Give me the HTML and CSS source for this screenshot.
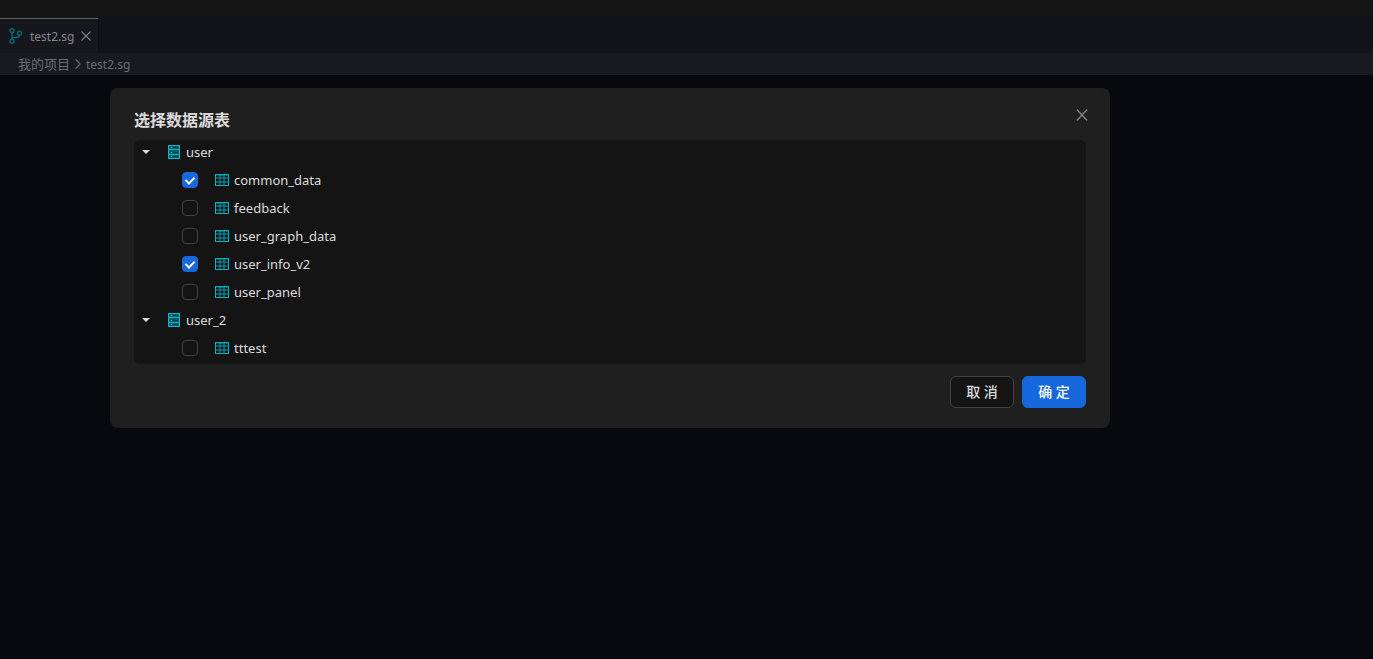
FILE: index.html
```html
<!DOCTYPE html>
<html lang="zh-CN">
<head>
  <meta charset="UTF-8" />
  <meta name="viewport" content="width=device-width, initial-scale=1.0"/>
  <title>test2.sg</title>
  <link rel="stylesheet" href="styles.css">
</head>
<body>
  <!-- shared icons -->
  <svg class="sprite" aria-hidden="true">
    <symbol id="icon-database" viewBox="0 0 12 14">
      <rect x="0.5" y="0.5" width="11" height="13" fill="#075e69" stroke="#00b8cc"/>
      <path d="M1 4.5h10M1 9.5h10" stroke="#00b8cc"/>
      <path d="M3 2.5h1M3 7.5h1M3 11.5h1" stroke="#00c8dc"/>
      <path d="M5 2.5h5M5 7.5h5M5 11.5h5" stroke="#0d3a40"/>
    </symbol>
    <symbol id="icon-table" viewBox="0 0 14 12">
      <rect x="0.5" y="0.5" width="13" height="11" fill="#141414" stroke="#00b0c4"/>
      <path d="M1 1.5h12" stroke="#06525c"/>
      <path d="M1 4h12M1 8h12M5 1v10M9 1v10" stroke="#00a2b4"/>
    </symbol>
  </svg>

  <div class="app">
    <div class="titlebar"></div>
    <div class="tabs">
      <div class="tab">
        <svg class="branch" viewBox="0 0 14 16" width="14" height="16" fill="none" stroke="#086773" stroke-width="1.4">
          <circle cx="3" cy="2.7" r="2"/>
          <circle cx="3" cy="13.3" r="2"/>
          <circle cx="10.5" cy="5.2" r="2"/>
          <path d="M3 4.7v6.6M10.5 7.2c0 2-1.2 2.3-3 2.3H3"/>
        </svg>
        <span>test2.sg</span>
        <button class="tab-close" aria-label="关闭标签">
          <svg viewBox="0 0 10 10" width="10" height="10" fill="none" stroke="#7d7d7e" stroke-width="1.2"><path d="M0.5 0.5l9 9M9.5 0.5l-9 9"/></svg>
        </button>
      </div>
    </div>
    <nav class="breadcrumb">
      <span class="project">我的项目</span>
      <svg viewBox="0 0 6 10" width="6" height="10" fill="none" stroke="#64666b" stroke-width="1.2"><path d="M0.7 0.5L5.2 5L0.7 9.5"/></svg>
      <span>test2.sg</span>
    </nav>
    <main class="canvas"></main>
  </div>

  <div class="overlay">
    <div class="modal" role="dialog" aria-labelledby="modal-title">
      <button class="modal-close" aria-label="关闭">
        <svg viewBox="0 0 12 12" width="12" height="12" fill="none" stroke="#868686" stroke-width="1.2"><path d="M0.8 0.5l10.4 11M11.2 0.5l-10.4 11"/></svg>
      </button>
      <h2 class="modal-title" id="modal-title">选择数据源表</h2>

      <ul class="tree">
        <li>
          <div class="node">
            <button class="switcher" aria-label="收起 user"></button>
            <svg class="icon-db"><use href="#icon-database"/></svg>
            <span>user</span>
          </div>
          <ul>
            <li class="leaf">
              <input type="checkbox" id="common_data" checked>
              <label for="common_data"><svg class="icon-table"><use href="#icon-table"/></svg>common_data</label>
            </li>
            <li class="leaf">
              <input type="checkbox" id="feedback">
              <label for="feedback"><svg class="icon-table"><use href="#icon-table"/></svg>feedback</label>
            </li>
            <li class="leaf">
              <input type="checkbox" id="user_graph_data">
              <label for="user_graph_data"><svg class="icon-table"><use href="#icon-table"/></svg>user_graph_data</label>
            </li>
            <li class="leaf">
              <input type="checkbox" id="user_info_v2" checked>
              <label for="user_info_v2"><svg class="icon-table"><use href="#icon-table"/></svg>user_info_v2</label>
            </li>
            <li class="leaf">
              <input type="checkbox" id="user_panel">
              <label for="user_panel"><svg class="icon-table"><use href="#icon-table"/></svg>user_panel</label>
            </li>
          </ul>
        </li>
        <li>
          <div class="node">
            <button class="switcher" aria-label="收起 user_2"></button>
            <svg class="icon-db"><use href="#icon-database"/></svg>
            <span>user_2</span>
          </div>
          <ul>
            <li class="leaf">
              <input type="checkbox" id="tttest">
              <label for="tttest"><svg class="icon-table"><use href="#icon-table"/></svg>tttest</label>
            </li>
          </ul>
        </li>
      </ul>

      <div class="modal-footer">
        <button class="btn">取 消</button>
        <button class="btn primary">确 定</button>
      </div>
    </div>
  </div>
</body>
</html>
```
FILE: styles.css
```css
* {
  box-sizing: border-box;
}
body {
  margin: 0;
  background: #07090d;
  color: #dcdcdc;
  font-family: "Noto Sans", "Noto Sans CJK SC", sans-serif;
  font-size: 13px;
}
button {
  font: inherit;
  color: inherit;
  cursor: pointer;
}
svg {
  flex: none;
}
ul {
  list-style: none;
  margin: 0;
  padding: 0;
}
.sprite {
  position: absolute;
  width: 0;
  height: 0;
}

/* editor behind the dialog */
.app {
  display: flex;
  flex-direction: column;
  min-height: 100vh;
  border-bottom: 1px solid #060008;
  font-size: 12px;
}
.titlebar {
  height: 18px;
  background: #141414;
}
.tabs {
  display: flex;
  height: 35px;
  background: #121318;
}
.tab {
  display: flex;
  align-items: center;
  gap: 7px;
  padding: 0 7px 0 9px;
  background: #15171c;
  color: #858585;
  border-top: 1px solid #5c5d5f;
  border-right: 1px solid #0d0e11;
}
.tab-close {
  display: flex;
  padding: 0;
  border: none;
  background: none;
}
.breadcrumb {
  display: flex;
  align-items: center;
  gap: 5px;
  height: 22px;
  padding-left: 18px;
  background: #181a1f;
  color: #6b6d72;
}
.project {
  font-family: "Noto Sans CJK SC", sans-serif;
  font-size: 13px;
  line-height: 20px;
}
.canvas {
  flex: 1;
  background: #07090d;
}

/* dialog */
.overlay {
  position: fixed;
  inset: 0;
  padding: 88px 24px 24px 110px;
}
.modal {
  position: relative;
  max-width: 1000px;
  padding: 20px 24px;
  background: #1f1f1f;
  border-radius: 8px;
}
.modal-title {
  margin: 0 0 8px;
  font-size: 16px;
  font-weight: 600;
  line-height: 24px;
}
.modal-close {
  position: absolute;
  top: 16px;
  right: 17px;
  display: flex;
  align-items: center;
  justify-content: center;
  width: 22px;
  height: 22px;
  padding: 0;
  border: none;
  background: none;
}
.tree {
  background: #141414;
  border-radius: 6px;
}
.node,
.leaf {
  display: flex;
  align-items: center;
  height: 28px;
  padding-bottom: 4px;
}
.switcher {
  width: 24px;
  height: 24px;
  margin-right: 10px;
  padding: 0;
  border: none;
  background: none;
}
.switcher::before {
  content: "";
  display: block;
  width: 0;
  margin: 0 auto;
  border: 4px solid transparent;
  border-top-color: #dcdcdc;
  border-bottom: none;
}
.icon-db {
  width: 12px;
  height: 14px;
  margin-right: 6px;
}
.icon-table {
  width: 14px;
  height: 12px;
}
.leaf {
  padding-left: 48px;
}
.leaf label {
  display: flex;
  align-items: center;
  gap: 5px;
  cursor: pointer;
}
.leaf input {
  appearance: none;
  display: flex;
  justify-content: center;
  width: 16px;
  height: 16px;
  margin: 0 17px 0 0;
  border: 1px solid #424242;
  border-radius: 4px;
}
.leaf input:checked {
  background: #1668dc;
  border-color: #1668dc;
}
.leaf input:checked::before {
  content: "";
  box-sizing: border-box;
  width: 6px;
  height: 9px;
  margin-top: 2px;
  border: solid #fff;
  border-width: 0 2px 2px 0;
  transform: rotate(45deg);
}
.modal-footer {
  display: flex;
  justify-content: flex-end;
  gap: 8px;
  margin-top: 12px;
}
.btn {
  min-width: 64px;
  height: 32px;
  padding: 0 14px 2px;
  font-size: 14px;
  font-weight: 500;
  background: #141414;
  border: 1px solid #424242;
  border-radius: 6px;
}
.btn.primary {
  color: #fff;
  background: #1668dc;
  border-color: #1668dc;
}
```
